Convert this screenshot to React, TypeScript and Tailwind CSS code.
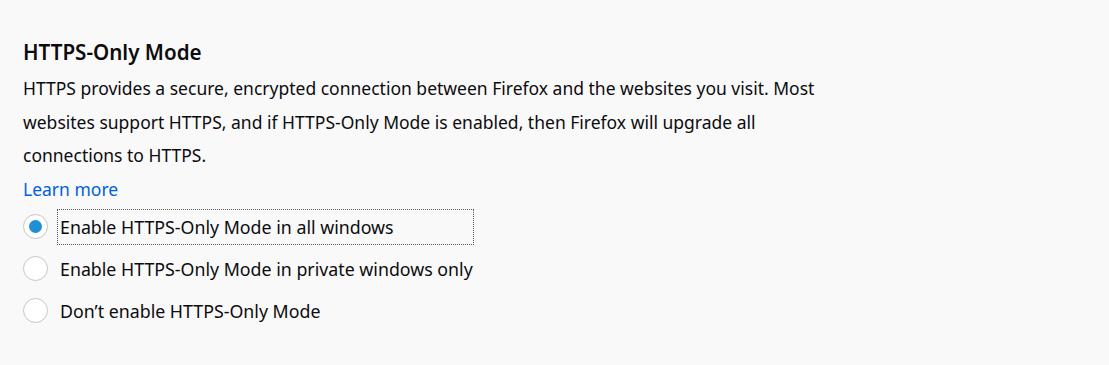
import React from "react";

const options = [
  "Enable HTTPS-Only Mode in all windows",
  "Enable HTTPS-Only Mode in private windows only",
  "Don\u2019t enable HTTPS-Only Mode",
];

export default function App() {
  return (
    <div
      className="w-[1109px] h-[365px] bg-[#f9f9fa] text-[#0c0c0d] pl-[23px] pt-[38px]"
      style={{ fontFamily: '"Noto Sans", "Open Sans", sans-serif' }}
    >
      <h2 className="text-[20.6px] font-semibold leading-[28px]">HTTPS-Only Mode</h2>
      <p className="text-[17.5px] leading-[33.5px] w-[830px] mt-[6px]">
        HTTPS provides a secure, encrypted connection between Firefox and the websites you visit. Most
        websites support HTTPS, and if HTTPS-Only Mode is enabled, then Firefox will upgrade all
        connections to HTTPS.
      </p>
      <a className="block w-fit text-[17.5px] leading-[30px] text-[#0060df] mt-[1px]">Learn more</a>
      <div className="flex flex-col gap-[18px] mt-[11px]">
        {options.map((label, i) => (
          <div key={label} className="flex items-center gap-[10px] h-[24px]">
            <div className="w-[25px] h-[25px] rounded-full border border-[#c6c6c8] bg-white flex items-center justify-center shrink-0">
              {i === 0 && <div className="w-[13px] h-[13px] rounded-full bg-[#1f8fd6]" />}
            </div>
            <span
              className={
                "text-[17.8px] leading-[34px] px-[2px] " +
                (i === 0 ? "border border-dotted border-[#555] w-[417px] -ml-[1px]" : "border border-transparent -ml-[1px]")
              }
            >
              {label}
            </span>
          </div>
        ))}
      </div>
    </div>
  );
}
